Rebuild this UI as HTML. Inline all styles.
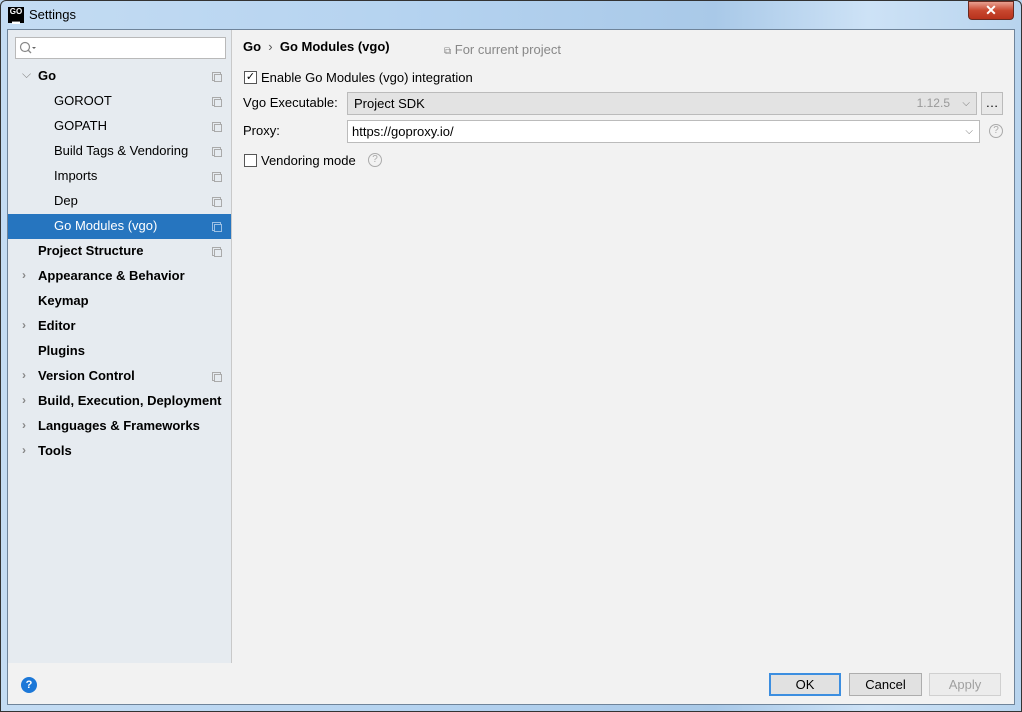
<!DOCTYPE html>
<html><head><meta charset="utf-8"><style>
*{box-sizing:border-box;margin:0;padding:0}
body{width:1022px;height:712px;overflow:hidden;font-family:"Liberation Sans",sans-serif;font-size:13px;color:#000;background:#bcd6ee;position:relative}
.frame{position:absolute;left:0;top:0;width:1022px;height:712px;border:1px solid #333;border-radius:6px 6px 0 0;background:linear-gradient(90deg,#c4dcf3 0%,#b5d3f0 40%,#a9c9e8 70%,#cde2f6 85%,#b8d4ee 100%)}
.title{position:absolute;left:29px;top:7px;font-size:13px;color:#000}
.logo{position:absolute;left:8px;top:7px;width:16px;height:16px;background:#000;color:#fff;font-size:8px;font-weight:bold;line-height:10px;text-align:center}
.close{position:absolute;left:968px;top:1px;width:46px;height:19px;border:1px solid #6a2a20;border-radius:0 0 4px 4px;background:linear-gradient(#e8a090,#c8472f 50%,#b8321c);color:#fff;text-align:center;font-weight:bold;font-size:14px;line-height:17px}
.client{position:absolute;left:7px;top:29px;width:1008px;height:676px;border:1px solid #6f849a;background:#f2f2f2}
.side{position:absolute;left:0;top:0;width:224px;height:633px;background:#e6ebf0;border-right:1px solid #c9c9c9}
.search{position:absolute;left:7px;top:7px;width:211px;height:22px;background:#fff;border:1px solid #b9b9b9}
.row{position:absolute;left:0;width:223px;height:25px;line-height:23px}
.row.sel{background:#2675bf;color:#fff;line-height:23px}
.b{font-weight:bold}
.cp{position:absolute;left:204px;top:8px;width:9px;height:9px;border:1px solid #aaa}
.cp:after{content:"";position:absolute;left:1px;top:1px;width:6px;height:6px;border:1px solid #aaa;background:#e6ebf0}
.sel .cp,.sel .cp:after{border-color:#9cc0e4;background:#2675bf}
.arr{position:absolute;left:14px;top:0;color:#888;font-size:12px}
.footer .btn{position:absolute;top:643px;height:23px;border:1px solid #adadad;background:#e1e1e1;text-align:center;line-height:21px}
</style></head><body>
<div class="frame"></div>
<div class="logo">GO<br>▬</div>
<div class="title">Settings</div>
<div class="close">✕</div>
<div class="client">
 <div class="side">
  <div class="search"><svg width="20" height="20" style="position:absolute;left:2px;top:1px"><circle cx="7" cy="8" r="4.5" fill="none" stroke="#888" stroke-width="1.2"/><line x1="10" y1="11" x2="13" y2="14" stroke="#888" stroke-width="1.3"/><path d="M14 8l4 0l-2 2z" fill="#666"/></svg></div>
  <div class="row" style="top:34px"><span class="arr" style="top:-1px">⌵</span><span class="b" style="position:absolute;left:30px">Go</span><div class="cp"></div></div>
  <div class="row" style="top:59px"><span style="position:absolute;left:46px">GOROOT</span><div class="cp"></div></div>
  <div class="row" style="top:84px"><span style="position:absolute;left:46px">GOPATH</span><div class="cp"></div></div>
  <div class="row" style="top:109px"><span style="position:absolute;left:46px">Build Tags &amp; Vendoring</span><div class="cp"></div></div>
  <div class="row" style="top:134px"><span style="position:absolute;left:46px">Imports</span><div class="cp"></div></div>
  <div class="row" style="top:159px"><span style="position:absolute;left:46px">Dep</span><div class="cp"></div></div>
  <div class="row sel" style="top:184px"><span style="position:absolute;left:46px">Go Modules (vgo)</span><div class="cp"></div></div>
  <div class="row b" style="top:209px"><span style="position:absolute;left:30px">Project Structure</span><div class="cp"></div></div>
  <div class="row b" style="top:234px"><span class="arr">›</span><span style="position:absolute;left:30px">Appearance &amp; Behavior</span></div>
  <div class="row b" style="top:259px"><span style="position:absolute;left:30px">Keymap</span></div>
  <div class="row b" style="top:284px"><span class="arr">›</span><span style="position:absolute;left:30px">Editor</span></div>
  <div class="row b" style="top:309px"><span style="position:absolute;left:30px">Plugins</span></div>
  <div class="row b" style="top:334px"><span class="arr">›</span><span style="position:absolute;left:30px">Version Control</span><div class="cp"></div></div>
  <div class="row b" style="top:359px"><span class="arr">›</span><span style="position:absolute;left:30px">Build, Execution, Deployment</span></div>
  <div class="row b" style="top:384px"><span class="arr">›</span><span style="position:absolute;left:30px">Languages &amp; Frameworks</span></div>
  <div class="row b" style="top:409px"><span class="arr">›</span><span style="position:absolute;left:30px">Tools</span></div>
 </div>
 <div style="position:absolute;left:235px;top:9px" class="b">Go &nbsp;<span style="font-weight:normal;color:#555">›</span>&nbsp; Go Modules (vgo)</div>
 <div style="position:absolute;left:436px;top:12px;color:#888"><span style="font-size:10px">⧉</span> For current project</div>
 <div style="position:absolute;left:236px;top:41px;width:13px;height:13px;border:1px solid #555;background:#fff;font-size:11px;line-height:11px;text-align:center">✓</div>
 <div style="position:absolute;left:253px;top:40px">Enable Go Modules (vgo) integration</div>
 <div style="position:absolute;left:235px;top:65px">Vgo Executable:</div>
 <div style="position:absolute;left:339px;top:62px;width:630px;height:23px;border:1px solid #bbb;background:#e3e3e3;line-height:21px;padding-left:6px">Project SDK<span style="position:absolute;right:26px;color:#999;font-size:12px">1.12.5</span><span style="position:absolute;right:6px;color:#777;font-size:10px">⌵</span></div>
 <div style="position:absolute;left:973px;top:62px;width:22px;height:23px;border:1px solid #bbb;background:#e8e8e8;text-align:center;line-height:19px">…</div>
 <div style="position:absolute;left:235px;top:93px">Proxy:</div>
 <div style="position:absolute;left:339px;top:90px;width:633px;height:23px;border:1px solid #bbb;background:#fff;line-height:21px;padding-left:4px">https://goproxy.io/<span style="position:absolute;right:6px;color:#777;font-size:10px">⌵</span></div>
 <div style="position:absolute;left:981px;top:94px;width:14px;height:14px;border:1px solid #aaa;border-radius:50%;color:#aaa;font-size:10px;text-align:center;line-height:12px">?</div>
 <div style="position:absolute;left:236px;top:124px;width:13px;height:13px;border:1px solid #555;background:#fff"></div>
 <div style="position:absolute;left:253px;top:123px">Vendoring mode</div>
 <div style="position:absolute;left:360px;top:123px;width:14px;height:14px;border:1px solid #aaa;border-radius:50%;color:#aaa;font-size:10px;text-align:center;line-height:12px">?</div>
 <div class="footer">
  <div style="position:absolute;left:13px;top:647px;width:16px;height:16px;border-radius:50%;background:#1c78d8;color:#fff;font-size:11px;font-weight:bold;text-align:center;line-height:16px">?</div>
  <div class="btn" style="left:761px;width:72px;border:2px solid #3c8ee0;line-height:19px">OK</div>
  <div class="btn" style="left:841px;width:73px">Cancel</div>
  <div class="btn" style="left:921px;width:72px;color:#a0a0a0;border-color:#d0d0d0;background:#ececec">Apply</div>
 </div>
</div>
</body></html>
